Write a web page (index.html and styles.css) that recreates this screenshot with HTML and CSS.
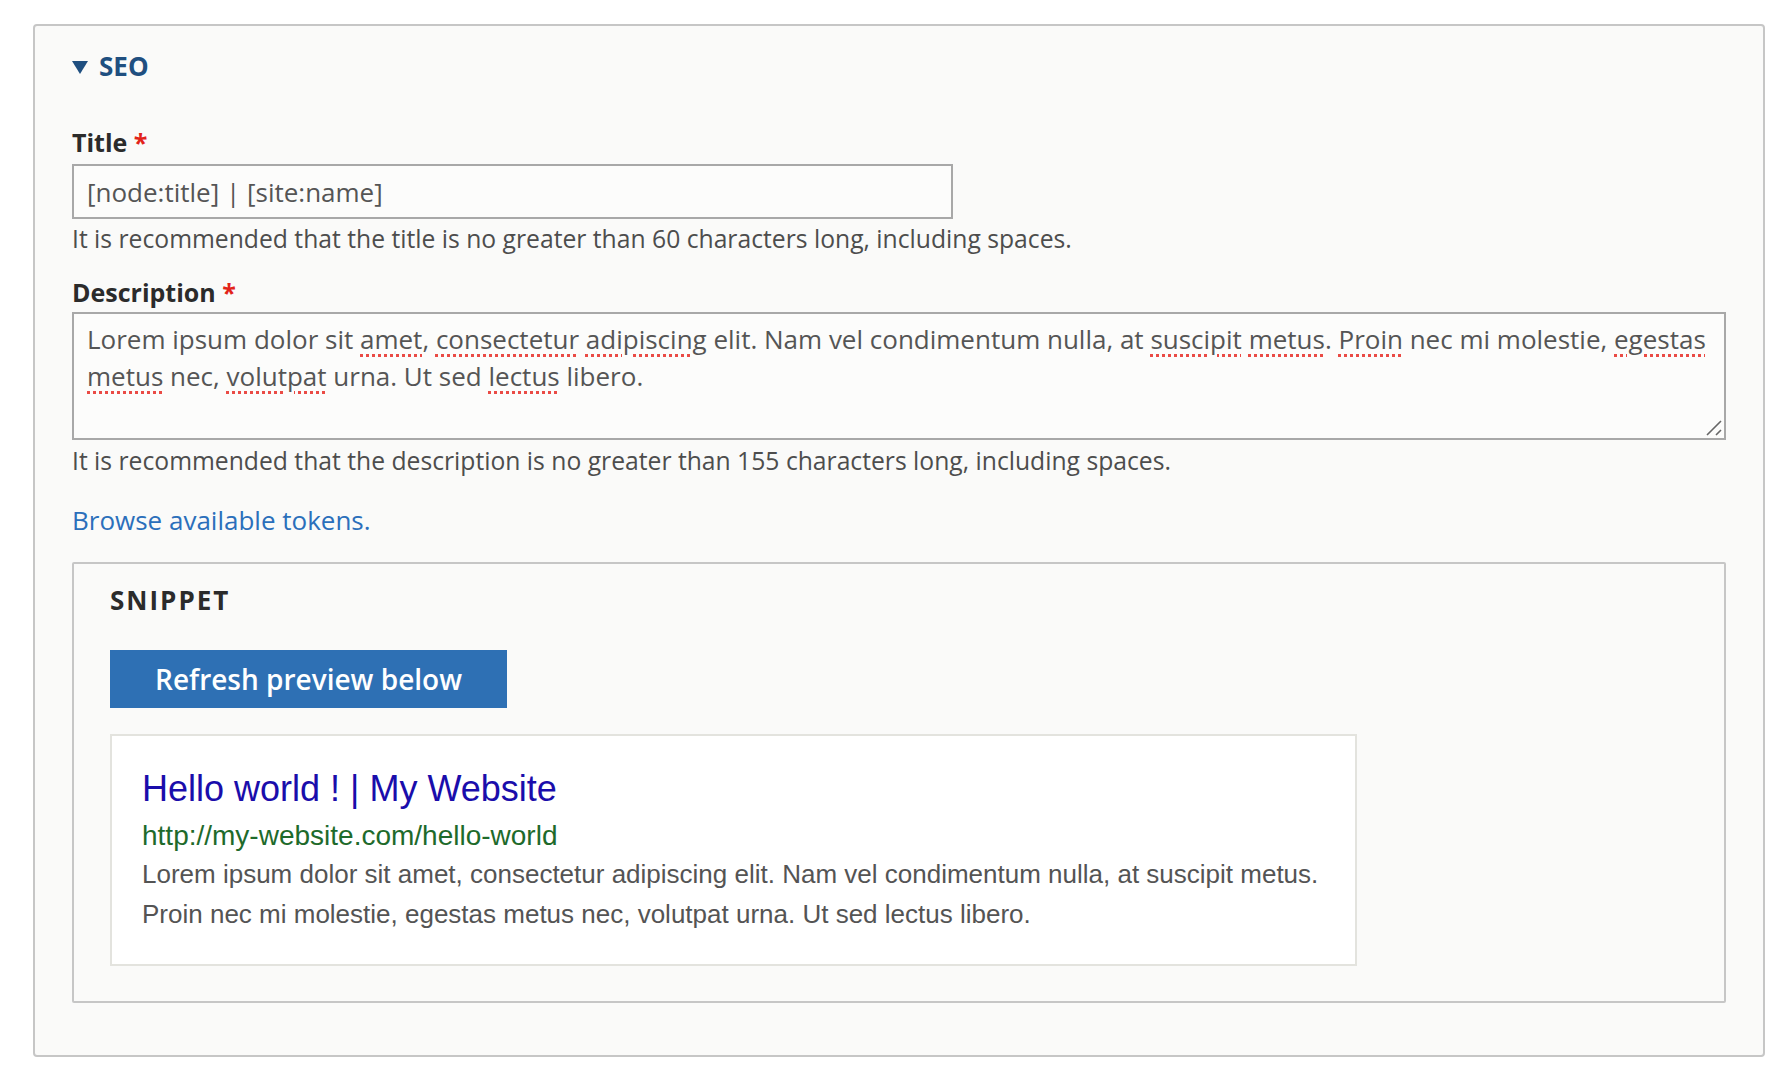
FILE: index.html
```html
<!DOCTYPE html>
<html lang="en">
<head>
    <meta charset="UTF-8">
    <meta name="viewport" content="width=device-width, initial-scale=1.0">
    <title>SEO</title>
    <link rel="stylesheet" href="styles.css">
</head>
<body>
    <details class="seo-box" open>
        <summary class="seo-summary">
            <svg class="seo-arrow" width="16" height="13" viewBox="0 0 16 13"><polygon points="0,0 16,0 8,13" fill="currentColor"/></svg>
            SEO
        </summary>

        <div class="form-item">
            <label class="form-label" for="seo-title">Title <span class="required">*</span></label>
            <input class="form-text" id="seo-title" type="text" value="[node:title] | [site:name]">
            <div class="description">It is recommended that the title is no greater than 60 characters long, including spaces.</div>
        </div>

        <div class="form-item form-item-textarea">
            <label class="form-label">Description <span class="required">*</span></label>
            <div class="form-textarea">
                Lorem ipsum dolor sit <span class="typo">amet</span>, <span class="typo">consectetur</span> <span class="typo">adipiscing</span> elit. Nam vel condimentum nulla, at <span class="typo">suscipit</span> <span class="typo">metus</span>. <span class="typo">Proin</span> nec mi molestie, <span class="typo">egestas</span> <span class="typo">metus</span> nec, <span class="typo">volutpat</span> urna. Ut sed <span class="typo">lectus</span> libero.
                <svg class="grip" width="18" height="18" viewBox="0 0 18 18"><path d="M2 16 L16 2 M11 16 L16 11" stroke="#666" stroke-width="1.6" fill="none"/></svg>
            </div>
            <div class="description description-last">It is recommended that the description is no greater than 155 characters long, including spaces.</div>
        </div>

        <a class="token-link" href="#">Browse available tokens.</a>

        <div class="snippet">
            <h3 class="snippet-title">Snippet</h3>
            <button class="button" type="button">Refresh preview below</button>
            <div class="preview">
                <div class="preview-title">Hello world ! | My Website</div>
                <div class="preview-url">http://my-website.com/hello-world</div>
                <div class="preview-desc">Lorem ipsum dolor sit amet, consectetur adipiscing elit. Nam vel condimentum nulla, at suscipit metus. Proin nec mi molestie, egestas metus nec, volutpat urna. Ut sed lectus libero.</div>
            </div>
        </div>
    </details>
</body>
</html>
```

FILE: styles.css
```css
body {
    margin: 0;
    padding: 24px 25px 23px 33px;
    background-color: #fff;
    font-family: 'Open Sans', 'Liberation Sans', sans-serif;
    color: #2b2b2b;
}
.seo-box {
    background-color: #fafaf9;
    border: 2px solid #c6c6c6;
    border-radius: 4px;
    padding: 0 37px 52px 37px;
}
.seo-summary {
    list-style: none;
    display: flex;
    align-items: center;
    gap: 11px;
    padding-top: 23px;
    font-size: 26px;
    line-height: 34px;
    font-weight: 700;
    color: #1f4f80;
    cursor: pointer;
}
.seo-summary::-webkit-details-marker {
    display: none;
}
.seo-arrow {
    margin-top: 2px;
}
.form-item {
    margin-top: 42px;
}
.form-item-textarea {
    margin-top: 21px;
}
.form-label {
    display: block;
    font-size: 25px;
    line-height: 34px;
    font-weight: 700;
    color: #2b2b2b;
}
.required {
    color: #e2231a;
}
.form-text {
    display: block;
    box-sizing: border-box;
    width: 881px;
    height: 55px;
    margin: 5px 0 0;
    padding: 0 13px;
    border: 2px solid #a8a8a8;
    background-color: #fcfcfb;
    font-family: 'Open Sans', sans-serif;
    font-size: 26px;
    color: #555;
    outline: none;
}
.form-textarea {
    position: relative;
    box-sizing: border-box;
    height: 128px;
    margin-top: 3px;
    padding: 7px 16px 0 13px;
    border: 2px solid #a8a8a8;
    background-color: #fcfcfb;
    font-size: 26px;
    line-height: 37px;
    color: #555;
}
.typo {
    text-decoration: underline dotted #ea4b45;
    text-decoration-thickness: 3px;
    text-underline-offset: 5px;
}
.grip {
    position: absolute;
    right: 1px;
    bottom: 1px;
}
.description {
    margin-top: 5px;
    font-size: 24.7px;
    line-height: 30px;
    color: #4d4d4d;
}
.description-last {
    margin-top: 6px;
}
.token-link {
    display: inline-block;
    margin-top: 27px;
    font-size: 26px;
    line-height: 34px;
    color: #2b6fbb;
    text-decoration: none;
}
.snippet {
    margin-top: 25px;
    padding: 19px 35px 35px 36px;
    border: 2px solid #c6c6c6;
    border-radius: 2px;
    background-color: #fafaf9;
}
.snippet-title {
    margin: 0;
    font-size: 26px;
    line-height: 34px;
    font-weight: 700;
    letter-spacing: 2px;
    text-transform: uppercase;
    color: #2b2b2b;
}
.button {
    display: block;
    height: 58px;
    margin-top: 33px;
    padding: 0 45px;
    border: none;
    background-color: #2e70b4;
    color: #fff;
    font-family: 'Open Sans', sans-serif;
    font-size: 28px;
    font-weight: 600;
    line-height: 58px;
    cursor: pointer;
}
.preview {
    box-sizing: border-box;
    width: 1247px;
    margin-top: 26px;
    padding: 31px 30px 30px;
    border: 2px solid #e3e3de;
    background-color: #fff;
    font-family: 'Liberation Sans', Arial, sans-serif;
}
.preview-title {
    font-size: 36px;
    line-height: 44px;
    color: #1a0dab;
}
.preview-url {
    margin-top: 7px;
    font-size: 28px;
    line-height: 36px;
    color: #1e6a2b;
}
.preview-desc {
    font-size: 26px;
    line-height: 40px;
    color: #545454;
}
```
